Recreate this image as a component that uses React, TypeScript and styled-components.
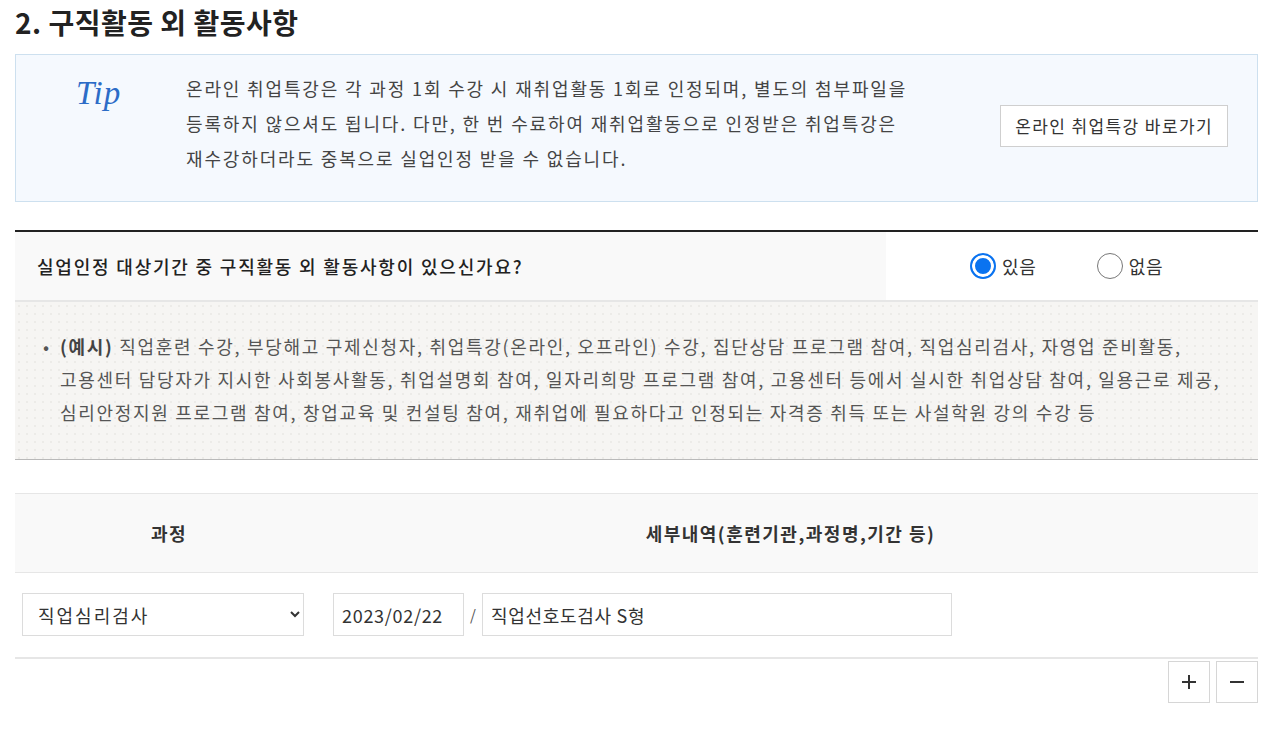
import React, { useState } from 'react'
import styled, { createGlobalStyle } from 'styled-components'

const GlobalStyle = createGlobalStyle`
  html, body {
    margin: 0;
    padding: 0;
    background: #fff;
  }
  body {
    font-family: 'Noto Sans CJK KR', 'Noto Sans', sans-serif;
    color: #333;
  }
  * { box-sizing: border-box; }
`

const Page = styled.div`
  width: 1243px;
  margin-left: 15px;
`

const Title = styled.h2`
  margin: 0;
  height: 54px;
  padding-top: 2px;
  font-size: 28px;
  line-height: 40px;
  font-weight: 700;
  color: #222;
  letter-spacing: 0.5px;
`

const TipBox = styled.div`
  display: flex;
  align-items: center;
  height: 148px;
  background: #f5f9fe;
  border: 1px solid #cde0ef;
`

const TipMark = styled.div`
  width: 170px;
  align-self: flex-start;
  padding: 20px 0 0 60px;
  font-family: 'Liberation Serif', serif;
  font-style: italic;
  font-size: 33px;
  color: #2c6cc7;
  letter-spacing: 1px;
`

const TipText = styled.p`
  flex: 1;
  align-self: flex-start;
  margin: 0;
  padding-top: 16px;
  font-size: 18px;
  line-height: 35px;
  color: #444;
  letter-spacing: 1.85px;
`

const LinkButton = styled.button`
  margin: 0 29px 5px 0;
  height: 42px;
  padding: 0 14px;
  background: #fff;
  border: 1px solid #cfcfcf;
  font-family: inherit;
  font-size: 17px;
  color: #333;
  letter-spacing: 1.4px;
  cursor: pointer;
`

const Question = styled.div`
  display: flex;
  margin-top: 28px;
  border-top: 2px solid #222;
  border-bottom: 2px solid #e6e6e6;
  height: 72px;
`

const QuestionLabel = styled.div`
  width: 871px;
  display: flex;
  align-items: center;
  padding-left: 22px;
  background: #f9f9f9;
  font-size: 18px;
  font-weight: 500;
  color: #222;
  letter-spacing: 1.8px;
`

const Options = styled.div`
  flex: 1;
  display: flex;
  align-items: center;
  gap: 60px;
  padding-left: 84px;
`

const Option = styled.label`
  display: flex;
  align-items: center;
  gap: 6px;
  font-size: 18px;
  color: #333;
  letter-spacing: 0.8px;
  cursor: pointer;
`

const Radio = styled.input`
  appearance: none;
  margin: 0;
  width: 26px;
  height: 26px;
  border-radius: 50%;
  border: 1px solid #777;
  background: #fff;
  &:checked {
    border: 2px solid #0a73f0;
    box-shadow: inset 0 0 0 3px #fff;
    background: #0a73f0;
  }
`

const Example = styled.div`
  padding: 28px 0 30px 28px;
  background-color: #f6f5f3;
  background-image: radial-gradient(#ecebe8 1px, transparent 1.2px);
  background-size: 8px 8px;
  border-bottom: 1px solid #b9b9b9;
  font-size: 18px;
  line-height: 33px;
  color: #555;
  letter-spacing: 1.7px;
`

const ExampleItem = styled.div`
  display: flex;
`

const Bullet = styled.span`
  width: 17px;
  flex-shrink: 0;
  font-size: 18px;
  color: #555;
`

const Strong = styled.b`
  font-weight: 700;
  color: #444;
`

const Table = styled.table`
  width: 100%;
  margin-top: 33px;
  border-collapse: collapse;
`

const Th = styled.th<{ $w?: number }>`
  width: ${p => (p.$w ? `${p.$w}px` : 'auto')};
  height: 79px;
  background: #f9f9f9;
  border-top: 1px solid #e6e6e6;
  border-bottom: 1px solid #e6e6e6;
  font-size: 18px;
  font-weight: 700;
  color: #333;
  letter-spacing: 1.5px;
`

const Td = styled.td`
  height: 85px;
  border-bottom: 2px solid #e6e6e6;
  vertical-align: middle;
`

const Cells = styled.div`
  display: flex;
  align-items: center;
`

const Select = styled.select`
  margin-left: 6px;
  width: 282px;
  height: 43px;
  padding: 0 8px 0 11px;
  border: 1px solid #dcdcdc;
  background: #fff;
  font-family: inherit;
  font-size: 18px;
  color: #333;
  letter-spacing: 2px;
`

const Input = styled.input<{ $w: number }>`
  width: ${p => p.$w}px;
  height: 43px;
  padding: 0 8px;
  border: 1px solid #dcdcdc;
  background: #fff;
  font-family: inherit;
  font-size: 18px;
  color: #333;
  letter-spacing: 0.7px;
`

const DateInput = styled(Input)`
  margin-left: 29px;
`

const Slash = styled.span`
  width: 18px;
  text-align: center;
  color: #555;
  font-size: 15px;
`

const Controls = styled.div`
  display: flex;
  justify-content: flex-end;
  gap: 6px;
  padding-top: 2px;
`

const IconButton = styled.button`
  width: 42px;
  height: 42px;
  display: flex;
  align-items: center;
  justify-content: center;
  padding: 0;
  background: #fff;
  border: 1px solid #d6d6d6;
  cursor: pointer;
`

export default function App() {
  const [has, setHas] = useState(true)

  return (
    <Page>
      <GlobalStyle />
      <Title>2. 구직활동 외 활동사항</Title>

      <TipBox>
        <TipMark>Tip</TipMark>
        <TipText>
          온라인 취업특강은 각 과정 1회 수강 시 재취업활동 1회로 인정되며, 별도의 첨부파일을
          <br />
          등록하지 않으셔도 됩니다. 다만, 한 번 수료하여 재취업활동으로 인정받은 취업특강은
          <br />
          재수강하더라도 중복으로 실업인정 받을 수 없습니다.
        </TipText>
        <LinkButton>온라인 취업특강 바로가기</LinkButton>
      </TipBox>

      <Question>
        <QuestionLabel>실업인정 대상기간 중 구직활동 외 활동사항이 있으신가요?</QuestionLabel>
        <Options>
          <Option>
            <Radio type="radio" name="has" checked={has} onChange={() => setHas(true)} />
            있음
          </Option>
          <Option>
            <Radio type="radio" name="has" checked={!has} onChange={() => setHas(false)} />
            없음
          </Option>
        </Options>
      </Question>

      <Example>
        <ExampleItem>
          <Bullet>•</Bullet>
          <span>
            <Strong>(예시)</Strong> 직업훈련 수강, 부당해고 구제신청자, 취업특강(온라인, 오프라인) 수강, 집단상담 프로그램 참여, 직업심리검사, 자영업 준비활동,
            <br />
            고용센터 담당자가 지시한 사회봉사활동, 취업설명회 참여, 일자리희망 프로그램 참여, 고용센터 등에서 실시한 취업상담 참여, 일용근로 제공,
            <br />
            심리안정지원 프로그램 참여, 창업교육 및 컨설팅 참여, 재취업에 필요하다고 인정되는 자격증 취득 또는 사설학원 강의 수강 등
          </span>
        </ExampleItem>
      </Example>

      <Table>
        <thead>
          <tr>
            <Th $w={308}>과정</Th>
            <Th>세부내역(훈련기관,과정명,기간 등)</Th>
          </tr>
        </thead>
        <tbody>
          <tr>
            <Td colSpan={2}>
              <Cells>
                <Select defaultValue="직업심리검사">
                  <option>직업심리검사</option>
                  <option>직업훈련 수강</option>
                  <option>취업특강</option>
                </Select>
                <DateInput $w={131} defaultValue="2023/02/22" />
                <Slash>/</Slash>
                <Input $w={470} defaultValue="직업선호도검사 S형" />
              </Cells>
            </Td>
          </tr>
        </tbody>
      </Table>

      <Controls>
        <IconButton aria-label="추가">
          <svg width="16" height="16" viewBox="0 0 16 16">
            <path d="M8 1v14M1 8h14" stroke="#333" strokeWidth="2" />
          </svg>
        </IconButton>
        <IconButton aria-label="삭제">
          <svg width="16" height="16" viewBox="0 0 16 16">
            <path d="M1 8h14" stroke="#333" strokeWidth="2" />
          </svg>
        </IconButton>
      </Controls>
    </Page>
  )
}
